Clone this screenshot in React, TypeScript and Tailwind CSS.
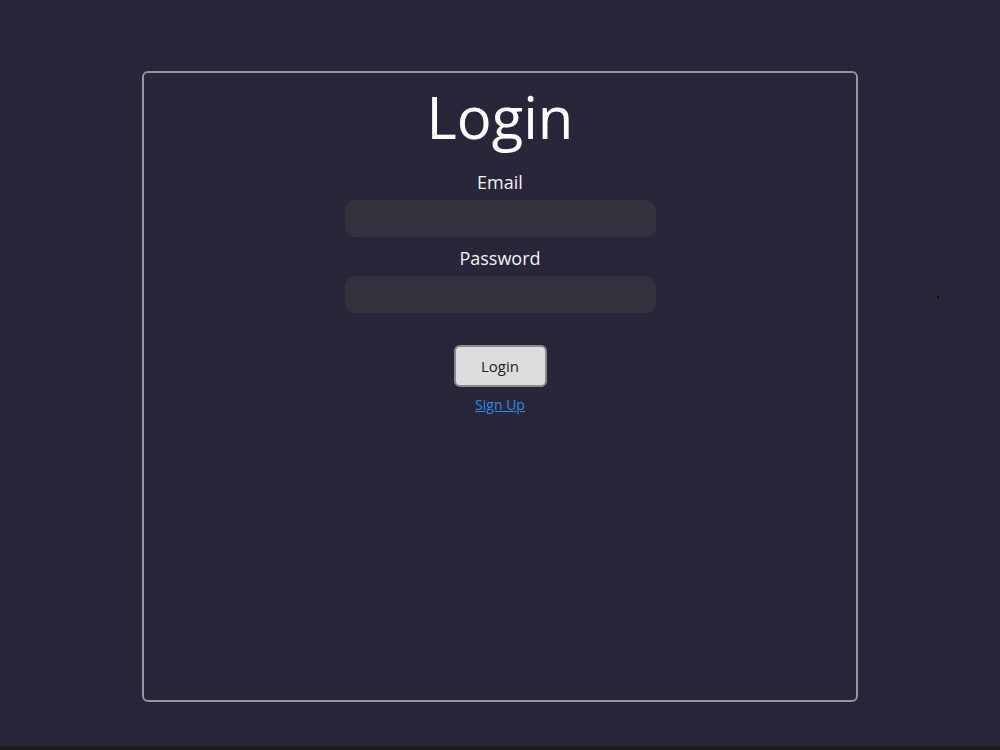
import { useState } from "react";

export default function App() {
  const [email, setEmail] = useState("");
  const [password, setPassword] = useState("");

  return (
    <div className="relative w-full h-[750px] bg-[#1b1b1b] font-['Open_Sans',sans-serif]">
      <div className="h-[746px] bg-[#29263a] pt-[71px]">
        {/* Login card */}
        <div className="mx-auto w-[716px] h-[631px] border-2 border-[#96949e] rounded-[6px] flex flex-col items-center">
          <h1 className="mt-[4px] text-[58px] leading-[80px] text-white">Login</h1>

          <label className="mt-[13px] text-[18px] leading-[24px] text-[#f2f2f2]">Email</label>
          <input
            type="email"
            value={email}
            onChange={(e) => setEmail(e.target.value)}
            className="mt-[6px] w-[311px] h-[37px] rounded-[10px] bg-[#35323f] px-3 text-white outline-none"
          />

          <label className="mt-[9px] text-[18px] leading-[24px] text-[#f2f2f2]">Password</label>
          <input
            type="password"
            value={password}
            onChange={(e) => setPassword(e.target.value)}
            className="mt-[6px] w-[311px] h-[37px] rounded-[10px] bg-[#35323f] px-3 text-white outline-none"
          />

          <button className="mt-[32px] w-[93px] h-[42px] rounded-[6px] border-2 border-[#8a8a8a] bg-[#dddddd] text-[15px] text-[#1e1e1e]">
            Login
          </button>

          <a href="#" className="mt-[8px] text-[14px] leading-[20px] text-[#2d8be6] underline">
            Sign Up
          </a>
        </div>
      </div>
      <span className="absolute left-[937px] top-[296px] w-[2px] h-[3px] bg-[#111111]" />
    </div>
  );
}
